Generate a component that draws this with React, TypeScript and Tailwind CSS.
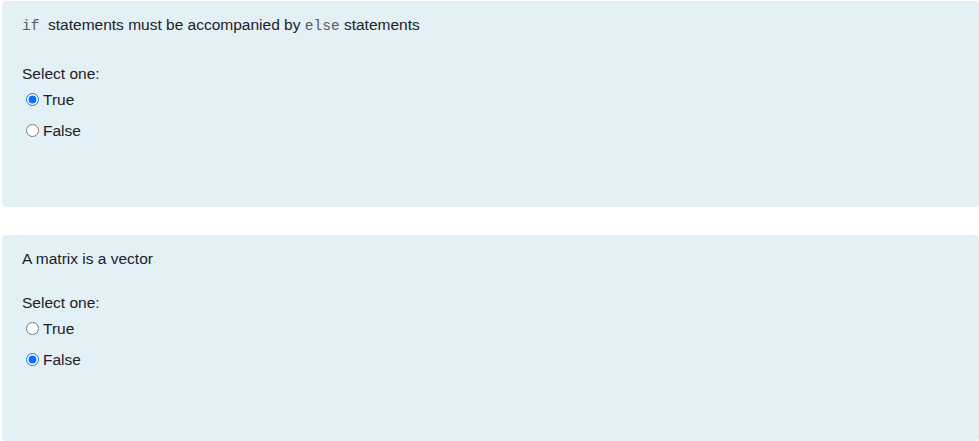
import React from "react";

type Question = {
  id: string;
  text: React.ReactNode;
  answer: "True" | "False";
  gapClass: string;
};

const codeClass = "font-['Liberation_Mono',monospace] text-[14.5px] text-[#5a5a5a]";

const questions: Question[] = [
  {
    id: "q1",
    text: (
      <>
        <code className={codeClass}>if</code>
        {"  "}statements must be accompanied by{" "}
        <code className={codeClass}>else</code> statements
      </>
    ),
    answer: "True",
    gapClass: "mb-[26px]",
  },
  { id: "q2", text: "A matrix is a vector", answer: "False", gapClass: "mb-[22px]" },
];

function QuestionBox({ q }: { q: Question }) {
  return (
    <div className="ml-[2px] h-[206px] rounded-[4px] bg-[#e3f0f6] px-5 pt-[13px] text-[#1d2125]">
      {/* question text */}
      <div className={`${q.gapClass} leading-[22px] whitespace-pre-wrap`}>{q.text}</div>
      <div className="leading-[22px]">Select one:</div>
      <div className="-mt-px flex flex-col">
        {["True", "False"].map((opt) => (
          <label key={opt} className="flex h-[31px] items-center">
            <input
              type="radio"
              name={q.id}
              defaultChecked={opt === q.answer}
              className="m-0 ml-1 mr-1 h-[13px] w-[13px] accent-[#0b6ffd]"
            />
            <span>{opt}</span>
          </label>
        ))}
      </div>
    </div>
  );
}

export default function App() {
  return (
    <div className="min-h-[441px] bg-white pt-px font-['Liberation_Sans',Arial,sans-serif] text-[15.5px]">
      <div className="flex flex-col gap-[28px]">
        {questions.map((q) => (
          <QuestionBox key={q.id} q={q} />
        ))}
      </div>
    </div>
  );
}
